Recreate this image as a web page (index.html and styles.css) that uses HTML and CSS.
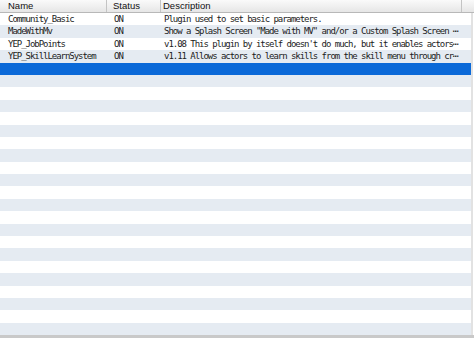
FILE: index.html
```html
<!DOCTYPE html>
<html>
<head>
<meta charset="utf-8">
<link rel="stylesheet" href="styles.css">
</head>
<body>
<div class="table">
  <div class="head">
    <div class="hc c-name">Name</div>
    <div class="hc c-status">Status</div>
    <div class="hc c-desc">Description</div>
    <div class="hc c-end"></div>
  </div>
  <div class="rows">
    <div class="row"><span class="c-name">Community_Basic</span><span class="c-status">ON</span><span class="c-desc">Plugin used to set basic parameters.</span></div>
    <div class="row"><span class="c-name">MadeWithMv</span><span class="c-status">ON</span><span class="c-desc">Show a Splash Screen "Made with MV" and/or a Custom Splash Screen ⋯</span></div>
    <div class="row"><span class="c-name">YEP_JobPoints</span><span class="c-status">ON</span><span class="c-desc">v1.08 This plugin by itself doesn't do much, but it enables actors⋯</span></div>
    <div class="row"><span class="c-name">YEP_SkillLearnSystem</span><span class="c-status">ON</span><span class="c-desc">v1.11 Allows actors to learn skills from the skill menu through cr⋯</span></div>
    <div class="row selected"></div>
    <div class="row"></div>
    <div class="row"></div>
    <div class="row"></div>
    <div class="row"></div>
    <div class="row"></div>
    <div class="row"></div>
    <div class="row"></div>
    <div class="row"></div>
    <div class="row"></div>
    <div class="row"></div>
    <div class="row"></div>
    <div class="row"></div>
    <div class="row"></div>
    <div class="row"></div>
    <div class="row"></div>
    <div class="row"></div>
    <div class="row"></div>
    <div class="row"></div>
    <div class="row"></div>
    <div class="row"></div>
    <div class="row"></div>
  </div>
</div>
</body>
</html>
```

FILE: styles.css
```css
html, body {
  margin: 0;
  padding: 0;
  background: #ffffff;
}
.table {
  width: 474px;
  height: 338px;
  overflow: hidden;
  display: flex;
  flex-direction: column;
  background: #ffffff;
  border-bottom: 3px solid #c9c9c9;
  box-sizing: border-box;
}
.head {
  display: grid;
  grid-template-columns: 107px 54px 301px 12px;
  height: 13px;
  box-sizing: border-box;
  background: linear-gradient(#fafafa, #e6e6e6);
  border-bottom: 1px solid #b8b8b8;
  font-family: "Liberation Sans", Arial, sans-serif;
  font-size: 9.5px;
  color: #111111;
  line-height: 12px;
}
.hc {
  border-right: 1px solid #c4c4c4;
  white-space: nowrap;
  overflow: hidden;
}
.hc.c-end {
  border-right: none;
}
.head .c-name { padding-left: 8px; }
.head .c-status { padding-left: 6px; }
.head .c-desc { padding-left: 2px; }
.rows {
  flex: 1;
  border-right: 2px solid #e2e2e2;
  margin-right: 1px;
}
.row {
  display: grid;
  grid-template-columns: 107px 54px 301px;
  height: 12.4px;
  font-family: "DejaVu Sans Mono", monospace;
  font-size: 9px;
  letter-spacing: -1.04px;
  line-height: 12.4px;
  color: #1c1c1c;
  white-space: nowrap;
}
.row:nth-child(even) {
  background: #e5ebf2;
}
.row.selected {
  background: #0b69d8;
}
.row span {
  overflow: hidden;
}
.row .c-name { padding-left: 8px; }
.row .c-status { padding-left: 7px; }
.row .c-desc { padding-left: 3px; }
```
